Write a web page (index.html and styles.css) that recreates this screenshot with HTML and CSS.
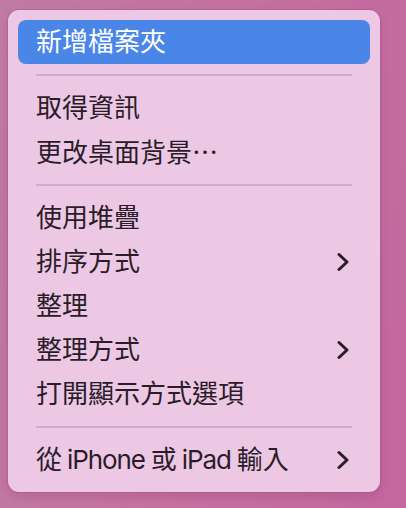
FILE: index.html
```html
<!DOCTYPE html>
<html lang="zh-Hant">
<head>
<meta charset="utf-8">
<title>Menu</title>
<link rel="stylesheet" href="styles.css">
</head>
<body>
<div class="menu">
  <div class="item active"><span class="label">新增檔案夾</span></div>
  <div class="sep"><div class="line"></div></div>
  <div class="item"><span class="label">取得資訊</span></div>
  <div class="item"><span class="label">更改桌面背景<span class="cjk">…</span></span></div>
  <div class="sep"><div class="line"></div></div>
  <div class="item"><span class="label">使用堆疊</span></div>
  <div class="item"><span class="label">排序方式</span>
    <svg class="chev" width="12" height="20" viewBox="0 0 12 20"><path d="M2 2.5 L10 10 L2 17.5" fill="none" stroke="currentColor" stroke-width="3" stroke-linecap="round" stroke-linejoin="round"/></svg>
  </div>
  <div class="item"><span class="label">整理</span></div>
  <div class="item"><span class="label">整理方式</span>
    <svg class="chev" width="12" height="20" viewBox="0 0 12 20"><path d="M2 2.5 L10 10 L2 17.5" fill="none" stroke="currentColor" stroke-width="3" stroke-linecap="round" stroke-linejoin="round"/></svg>
  </div>
  <div class="item"><span class="label">打開顯示方式選項</span></div>
  <div class="sep"><div class="line"></div></div>
  <div class="item"><span class="label">從<span class="lat">iPhone</span>或<span class="lat">iPad</span>輸入</span>
    <svg class="chev" width="12" height="20" viewBox="0 0 12 20"><path d="M2 2.5 L10 10 L2 17.5" fill="none" stroke="currentColor" stroke-width="3" stroke-linecap="round" stroke-linejoin="round"/></svg>
  </div>
</div>
</body>
</html>
```
FILE: styles.css
```css
html, body {
  margin: 0;
  padding: 0;
  width: 406px;
  height: 508px;
  overflow: hidden;
}
body {
  background: linear-gradient(100deg, #c07aa4 0%, #c4719f 50%, #c4679f 100%);
  font-family: "Inter", "Noto Sans CJK TC", sans-serif;
  padding-top: 10px;
  padding-left: 8px;
  box-sizing: border-box;
}
.menu {
  width: 372px;
  box-sizing: border-box;
  padding: 10px;
  background: #ecc8e5;
  border-radius: 11px;
  box-shadow: 0 0 0 1px rgba(150, 70, 120, 0.25), 0 4px 10px rgba(90, 20, 60, 0.15);
}
.item {
  height: 44px;
  display: flex;
  align-items: center;
  justify-content: space-between;
  padding: 0 21px 0 18px;
  font-size: 26px;
  line-height: 1;
  color: #2a1c28;
  border-radius: 8px;
}
.item.active {
  background: #4a86e8;
  color: #ffffff;
}
.label {
  white-space: nowrap;
}
.cjk {
  font-family: "Noto Sans CJK TC", sans-serif;
}
.lat {
  letter-spacing: -1.1px;
  margin: 0 6px 0 5px;
}
.chev {
  display: block;
  color: #2a1c28;
}
.sep {
  height: 22px;
  display: flex;
  align-items: center;
}
.line {
  flex: 1;
  height: 2px;
  margin: 0 18px;
  background: #d2abcb;
}
```
